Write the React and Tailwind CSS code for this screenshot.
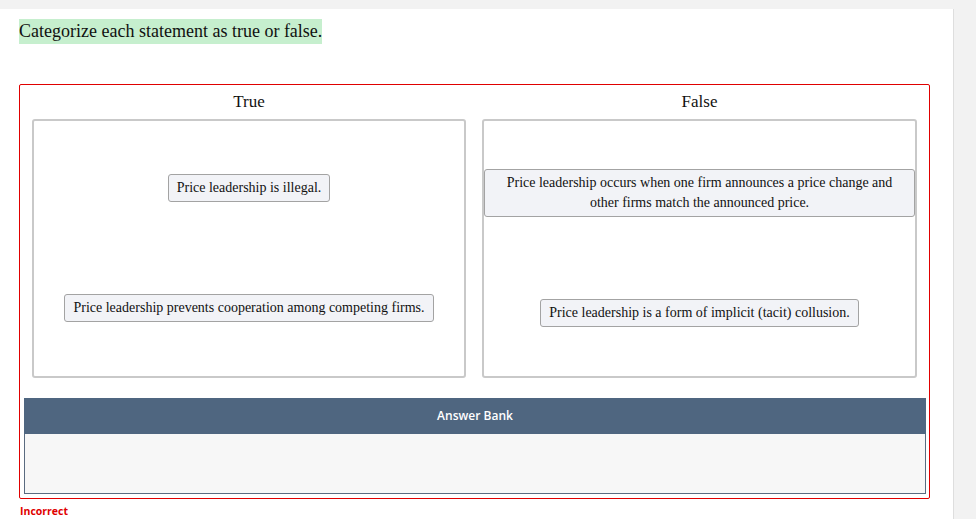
export default function App() {
  const serif = { fontFamily: '"Liberation Serif", "Times New Roman", serif' }

  const Card = ({ children, className = '' }) => (
    <div
      className={`bg-[#f2f3f7] border border-[#a3a3a3] rounded-[3px] px-[8px] py-[3px] text-[14px] leading-[20px] text-[#111] text-center ${className}`}
    >
      {children}
    </div>
  )

  return (
    <div className="w-[976px] h-[519px] bg-[#f2f2f2] overflow-hidden" style={serif}>
      <div className="mt-[9px] w-[954px] h-[510px] bg-white border-r border-[#dedede] pl-[19px] pt-[10px]">
        {/* Prompt */}
        <div className="inline-block bg-[#c6efce] text-[18px] leading-[25px] text-[#111]">
          Categorize each statement as true or false.
        </div>

        {/* Categorization area */}
        <div className="mt-[40px] w-[911px] border border-[#e00000] rounded-[2px] px-[12px] pb-[4px]">
          <div className="grid grid-cols-[434px_435px] gap-x-[16px]">
            <div className="h-[34px] flex items-center justify-center text-[17px] text-[#111]">True</div>
            <div className="h-[34px] flex items-center justify-center text-[17px] text-[#111]">False</div>

            <div className="h-[259px] border-2 border-[#c9c9c9] rounded-[3px] flex flex-col items-center pt-[53px] gap-[92px]">
              <Card>Price leadership is illegal.</Card>
              <Card>Price leadership prevents cooperation among competing firms.</Card>
            </div>

            <div className="h-[259px] border-2 border-[#c9c9c9] rounded-[3px] flex flex-col items-center pt-[48px] gap-[82px]">
              <Card className="w-full">
                Price leadership occurs when one firm announces a price change and
                <br />
                other firms match the announced price.
              </Card>
              <Card>Price leadership is a form of implicit (tacit) collusion.</Card>
            </div>
          </div>

          {/* Answer bank */}
          <div className="mt-[20px] ml-[-8px] mr-[-9px]">
            <div
              className="h-[36px] bg-[#4f6680] flex items-center justify-center text-white text-[12px] font-semibold"
              style={{ fontFamily: '"Open Sans", "Noto Sans", sans-serif' }}
            >
              Answer Bank
            </div>
            <div className="h-[60px] bg-[#f7f7f7] border border-t-0 border-[#5a6b80]" />
          </div>
        </div>

        <div
          className="mt-[5px] ml-[1px] text-[10.5px] leading-[14px] font-bold text-[#e00000]"
          style={{ fontFamily: '"Open Sans", "Noto Sans", sans-serif' }}
        >
          Incorrect
        </div>
      </div>
    </div>
  )
}
